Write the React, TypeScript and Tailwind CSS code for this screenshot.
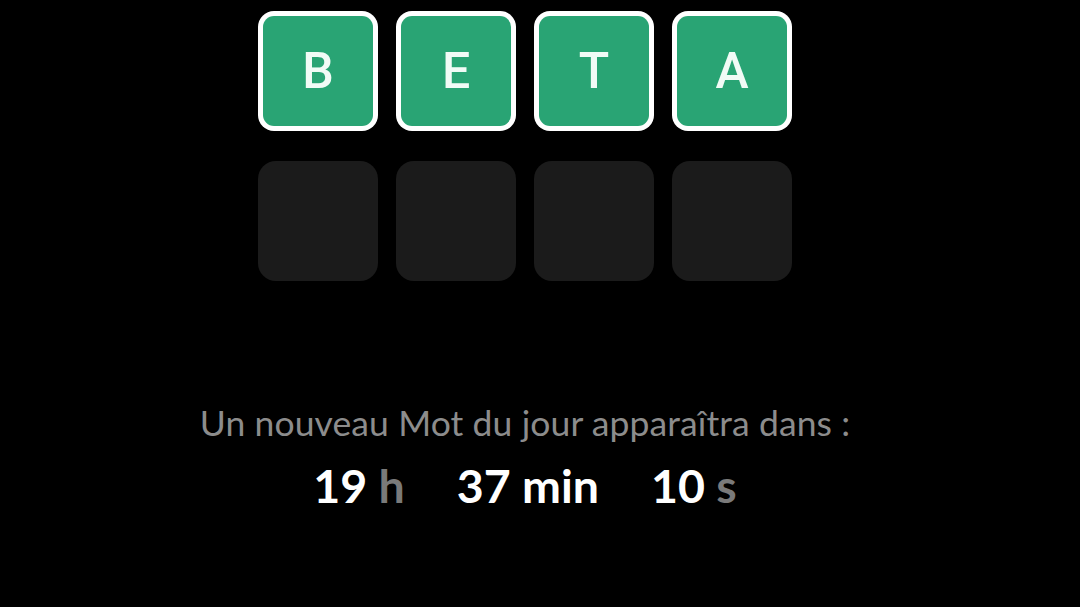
import React from "react";

const letters = ["B", "E", "T", "A"];

const Tile = ({ letter }: { letter?: string }) =>
    letter ? (
        <div className="w-[120px] h-[120px] rounded-[16px] bg-white p-[5px]">
            <div className="w-full h-full rounded-[11px] bg-[#29a474] flex items-center justify-center text-[50px] font-medium text-[#f1fbf6] font-['Roboto',sans-serif]">
                {letter}
            </div>
        </div>
    ) : (
        <div className="w-[120px] h-[120px] rounded-[18px] bg-[#1b1b1b]" />
    );

export default function App() {
    return (
        <div className="w-full h-[607px] bg-black flex flex-col items-center pr-[30px] font-['Lato',sans-serif] overflow-hidden">
            <div className="flex flex-col gap-[30px] pt-[11px]">
                <div className="flex gap-[18px]">
                    {letters.map((l) => (
                        <Tile key={l} letter={l} />
                    ))}
                </div>
                <div className="flex gap-[18px]">
                    {letters.map((l) => (
                        <Tile key={l} />
                    ))}
                </div>
            </div>
            <p className="mt-[120px] text-[35.5px] leading-[44px] tracking-[0.1px] text-[#8c8c8c]">
                Un nouveau Mot du jour apparaîtra dans :
            </p>
            <div className="mt-[15px] flex gap-[52px] text-[46.5px] leading-[50px] font-bold text-white">
                <span>
                    19 <span className="text-[#7a7a7a]">h</span>
                </span>
                <span>37 min</span>
                <span>
                    10 <span className="text-[#7a7a7a]">s</span>
                </span>
            </div>
        </div>
    );
}
